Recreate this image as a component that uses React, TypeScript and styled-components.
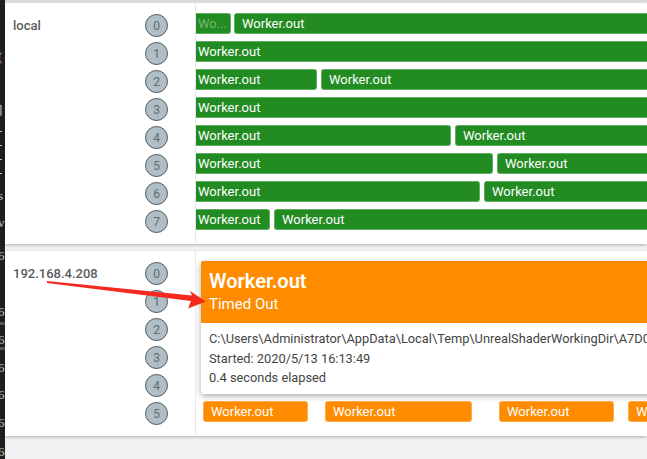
import React from 'react';
import styled, { createGlobalStyle } from 'styled-components';

const GlobalStyle = createGlobalStyle`
  html, body {
    margin: 0;
    padding: 0;
    overflow: hidden;
    background: #f2f2f2;
    font-family: Roboto, "Noto Sans", "Liberation Sans", sans-serif;
  }
`;

const Page = styled.div`
  position: relative;
  display: flex;
  width: 647px;
  height: 459px;
  overflow: hidden;
`;

const BackWindow = styled.div`
  width: 5px;
  flex-shrink: 0;
  background: #1f1f1f;
  display: flex;
  flex-direction: column;
  overflow: hidden;
`;

const Glyph = styled.span`
  display: block;
  height: 12px;
  line-height: 12px;
  margin-left: -2px;
  font-family: "Liberation Serif", serif;
  font-size: 13px;
  color: #c9c9c9;
`;

const Tick = styled.span`
  display: block;
  height: 3px;
  width: 5px;
  background: #555;
`;

const Main = styled.div`
  flex: 1;
  display: flex;
  flex-direction: column;
  gap: 7px;
  min-width: 0;
`;

const TopEdge = styled.div`
  height: 3px;
  margin-bottom: -7px;
  background: linear-gradient(#d4d4d4, #e9e9e9);
`;

const HostCard = styled.section`
  display: flex;
  background: #fff;
  box-shadow: 0 1px 3px rgba(0, 0, 0, 0.28);
`;

const HostCell = styled.div`
  width: 191px;
  flex-shrink: 0;
  box-sizing: border-box;
  display: flex;
  align-items: flex-start;
  padding: 10px 27px 0 8px;
  border-right: 1px solid #e8e8e8;
`;

const HostName = styled.div`
  flex: 1;
  padding-top: 1px;
  line-height: 23px;
  font-size: 13px;
  font-weight: 500;
  color: #5c5c5c;
`;

const SlotColumn = styled.div`
  display: flex;
  flex-direction: column;
  gap: 5px;
  padding-top: 1px;
`;

const Slot = styled.div`
  width: 23px;
  height: 23px;
  box-sizing: border-box;
  border-radius: 50%;
  border: 1px solid #4e5b61;
  background: #b0bec5;
  color: #5f6b71;
  font-size: 12px;
  display: flex;
  align-items: center;
  justify-content: center;
`;

const Timeline = styled.div`
  position: relative;
  flex: 1;
  min-width: 0;
  padding: 10px 0 14px;
  display: flex;
  flex-direction: column;
  gap: 7px;
  overflow: hidden;
`;

const Lane = styled.div`
  display: flex;
  height: 21px;
`;

const JobBar = styled.div<{ $color: string; $faded?: boolean }>`
  flex-shrink: 0;
  box-sizing: border-box;
  height: 21px;
  padding: 0 4px 0 7px;
  border: 1px solid rgba(255, 255, 255, 0.28);
  border-radius: 3px;
  background: ${(p) => p.$color};
  color: ${(p) => (p.$faded ? 'rgba(255,255,255,0.38)' : '#fff')};
  font-size: 13px;
  line-height: 19px;
  white-space: nowrap;
  overflow: hidden;
`;

const Popup = styled.div`
  position: absolute;
  left: 5px;
  top: 10px;
  width: 480px;
  border-radius: 2px;
  background: #fff;
  box-shadow: 0 2px 6px rgba(0, 0, 0, 0.35);
  overflow: hidden;
`;

const PopupHead = styled.div`
  background: #ff8c00;
  color: #fff;
  padding: 8px 8px;
`;

const PopupTitle = styled.div`
  font-size: 20px;
  font-weight: 600;
  line-height: 24px;
`;

const PopupStatus = styled.div`
  font-size: 15px;
  line-height: 22px;
`;

const PopupBody = styled.div`
  padding: 6px 8px 6px;
  color: #444;
  font-size: 12.8px;
  line-height: 19.5px;
  white-space: nowrap;
`;

const Arrow = styled.svg`
  position: absolute;
  left: 0;
  top: 0;
  pointer-events: none;
`;

type Bar = { from: number; to: number; label?: string; faded?: boolean };

const GREEN = '#228b22';
const ORANGE = '#ff8c00';

const localRows: Bar[][] = [
  [{ from: 191, to: 232, label: 'Wo...', faded: true }, { from: 235, to: 700 }],
  [{ from: 191, to: 700 }],
  [{ from: 191, to: 318 }, { from: 322, to: 700 }],
  [{ from: 191, to: 700 }],
  [{ from: 191, to: 452 }, { from: 456, to: 700 }],
  [{ from: 191, to: 494 }, { from: 498, to: 700 }],
  [{ from: 191, to: 481 }, { from: 485, to: 700 }],
  [{ from: 191, to: 271 }, { from: 275, to: 700 }],
];

const remoteRow: Bar[] = [
  { from: 204, to: 309 },
  { from: 326, to: 473 },
  { from: 500, to: 615 },
  { from: 629, to: 720 },
];
const remoteRows: Bar[][] = [0, 1, 2, 3, 4, 5].map(() => remoteRow);

const backGlyphs: { y: number; ch: string }[] = [
  { y: 57, ch: '(' },
  { y: 110, ch: ']' },
  { y: 131, ch: '-' },
  { y: 145, ch: '-' },
  { y: 159, ch: '-' },
  { y: 173, ch: '-' },
  { y: 196, ch: 's' },
  { y: 223, ch: 'v' },
  { y: 256, ch: '6' },
  { y: 312, ch: '6' },
  { y: 340, ch: '6' },
  { y: 368, ch: '6' },
  { y: 395, ch: '6' },
  { y: 423, ch: '6' },
  { y: 452, ch: '6' },
];

const LANE_ORIGIN = 197;

const Lanes = ({ rows, color }: { rows: Bar[][]; color: string }) => (
  <>
    {rows.map((row, i) => {
      let cursor = LANE_ORIGIN;
      return (
        <Lane key={i}>
          {row.map((bar, j) => {
            const gap = bar.from - cursor;
            cursor = bar.to;
            return (
              <JobBar
                key={j}
                $color={color}
                $faded={bar.faded}
                style={{ marginLeft: gap, width: bar.to - bar.from }}
              >
                {bar.label ?? 'Worker.out'}
              </JobBar>
            );
          })}
        </Lane>
      );
    })}
  </>
);

const Host = ({ name, rows, color, children }: {
  name: string; rows: Bar[][]; color: string; children?: React.ReactNode;
}) => (
  <HostCard>
    <HostCell>
      <HostName>{name}</HostName>
      <SlotColumn>
        {rows.map((_, i) => <Slot key={i}>{i}</Slot>)}
      </SlotColumn>
    </HostCell>
    <Timeline>
      <Lanes rows={rows} color={color} />
      {children}
    </Timeline>
  </HostCard>
);

const App = () => {
  let last = 0;
  return (
    <Page>
      <GlobalStyle />
      <BackWindow>
        {backGlyphs.map((g, i) => {
          const top = g.y - 6 - last;
          last = g.y + 6;
          return (
            <React.Fragment key={i}>
              <Glyph style={{ marginTop: top }}>{g.ch}</Glyph>
              {g.y === 312 && <Tick style={{ marginTop: 4, marginBottom: -7 }} />}
              {g.y === 340 && <Tick style={{ marginTop: 1, marginBottom: -4 }} />}
            </React.Fragment>
          );
        })}
      </BackWindow>
      <Main>
        <TopEdge />
        <Host name="local" rows={localRows} color={GREEN} />
        <Host name="192.168.4.208" rows={remoteRows} color={ORANGE}>
          <Popup>
            <PopupHead>
              <PopupTitle>Worker.out</PopupTitle>
              <PopupStatus>Timed Out</PopupStatus>
            </PopupHead>
            <PopupBody>
              <div>C:\Users\Administrator\AppData\Local\Temp\UnrealShaderWorkingDir\A7D0C5E64E2B1A9F</div>
              <div>Started: 2020/5/13 16:13:49</div>
              <div>0.4 seconds elapsed</div>
            </PopupBody>
          </Popup>
        </Host>
      </Main>
      <Arrow width="647" height="459" viewBox="0 0 647 459">
        <polygon
          points="47,281 192,295.5 190,291 206,301.5 188,308.5 191,301 47,283"
          fill="#f42a1e"
        />
      </Arrow>
    </Page>
  );
};

export default App;
